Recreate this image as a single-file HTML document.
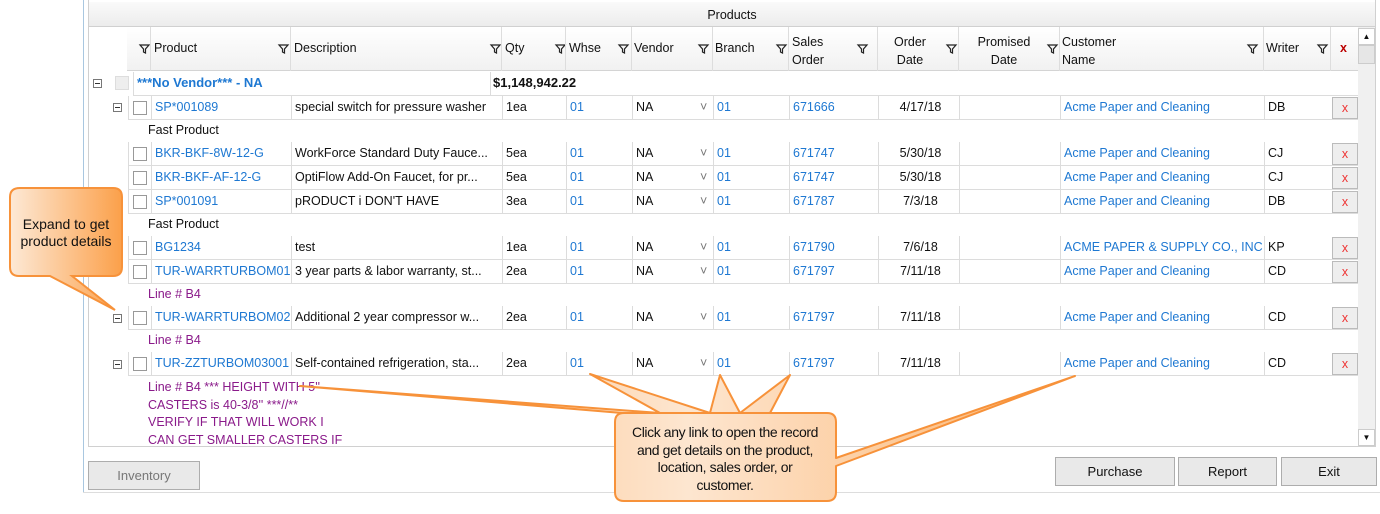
<!DOCTYPE html><html><head><style>
*{margin:0;padding:0;box-sizing:border-box}
body{width:1380px;height:514px;background:#fff;position:relative;overflow:hidden;font-family:"Liberation Sans",sans-serif;font-size:12.5px;color:#111}
.a{position:absolute}
.r{position:absolute;left:128px;width:1230px;height:24px;border-bottom:1px solid #dcdcdc;border-left:1px solid #dcdcdc}
.c{position:absolute;top:0;height:23px;line-height:23px;border-left:1px solid #dcdcdc;padding-left:3px;white-space:nowrap;overflow:hidden}
.l{color:#1e78d2}
.cb{position:absolute;left:4px;top:5px;width:14px;height:14px;border:1px solid #999;background:#fff}
.xb{position:absolute;left:1203px;top:1px;width:26px;height:22px;border:1px solid #bbb;background:#eee;color:#e33;text-align:center;line-height:20px}
.ex{position:absolute;width:9px;height:9px;border:1px solid #777;background:#fff}
.ex:after{content:"";position:absolute;left:1px;top:3px;width:5px;height:1px;background:#333}
.btn{position:absolute;border:1px solid #adadad;background:#e9e9e9;text-align:center;font-size:13px}
.n{position:absolute;color:#111;left:148px;font-size:12.5px}
.p{color:#8a1a8a}
.v{position:absolute;left:67px;color:#777}
</style></head><body>
<div class="a" style="left:83px;top:0;width:1px;height:493px;background:#a9c7e0"></div>
<div class="a" style="left:83px;top:492px;width:1297px;height:1px;background:#ddd"></div>
<div class="a" style="left:88px;top:0;width:1288px;height:447px;border:1px solid #d0d0d0;border-top:none"></div>
<div class="a" style="left:89px;top:2px;width:1286px;height:25px;background:linear-gradient(#fafafa,#ececec);border-bottom:1px solid #d0d0d0;text-align:center;line-height:26px;font-size:12.5px">Products</div>
<div class="a" style="left:89px;top:27px;width:1269px;height:44px;background:linear-gradient(#fff,#f1f1f1);border-bottom:1px solid #d4d4d4"></div>
<div class="a" style="left:89px;top:27px;width:38px;height:44px;background:#fff"></div>
<svg class="a" style="left:0;top:0" width="1380" height="80">
<g fill="none" stroke="#222" stroke-width="1.2">
<path id="fl" d="M140 45h9l-3.5 4v4l-2-1v-3z"/>
<use href="#fl" x="139"/><use href="#fl" x="351"/><use href="#fl" x="416"/><use href="#fl" x="479"/><use href="#fl" x="559"/><use href="#fl" x="637"/><use href="#fl" x="718"/><use href="#fl" x="807"/><use href="#fl" x="908"/><use href="#fl" x="1108"/><use href="#fl" x="1178"/>
</g>
<g stroke="#ddd"><path d="M150.5 27v44M290.5 27v44M501.5 27v44M565.5 27v44M631.5 27v44M712.5 27v44M788.5 27v44M877.5 27v44M958.5 27v44M1059.5 27v44M1263.5 27v44M1330.5 27v44"/></g>
</svg>
<div class="a" style="left:154px;top:41px">Product</div>
<div class="a" style="left:294px;top:41px">Description</div>
<div class="a" style="left:505px;top:41px">Qty</div>
<div class="a" style="left:569px;top:41px">Whse</div>
<div class="a" style="left:634px;top:41px">Vendor</div>
<div class="a" style="left:715px;top:41px">Branch</div>
<div class="a" style="left:792px;top:33px;line-height:18px">Sales<br>Order</div>
<div class="a" style="left:880px;top:33px;line-height:18px;width:60px;text-align:center">Order<br>Date</div>
<div class="a" style="left:962px;top:33px;line-height:18px;width:84px;text-align:center">Promised<br>Date</div>
<div class="a" style="left:1062px;top:33px;line-height:18px">Customer<br>Name</div>
<div class="a" style="left:1266px;top:41px">Writer</div>
<div class="a" style="left:1340px;top:41px;color:#b00;font-weight:bold">x</div>
<div class="a" style="left:1358px;top:27px;width:17px;height:419px;background:#f0f0f0"></div>
<div class="a" style="left:1358px;top:28px;width:17px;height:17px;border:1px solid #ccc;background:#fff;font-size:8px;text-align:center;line-height:15px">▲</div>
<div class="a" style="left:1358px;top:45px;width:17px;height:19px;border:1px solid #ccc;background:#e6e6e6"></div>
<div class="a" style="left:1358px;top:429px;width:17px;height:17px;border:1px solid #ccc;background:#fff;font-size:8px;text-align:center;line-height:15px">▼</div>
<div class="ex" style="left:93px;top:79px"></div>
<div class="a" style="left:115px;top:76px;width:14px;height:14px;background:#eee;border:1px solid #ddd"></div>
<div class="a" style="left:133px;top:72px;width:1225px;height:24px;border-left:1px solid #dcdcdc;border-bottom:1px solid #dcdcdc"></div>
<div class="a" style="left:137px;top:75px;font-weight:bold;color:#1e78d2;font-size:13px">***No Vendor*** - NA</div>
<div class="a" style="left:490px;top:72px;height:24px;border-left:1px solid #dcdcdc"></div>
<div class="a" style="left:493px;top:75px;font-weight:bold;font-size:13px">$1,148,942.22</div>

<div class="ex" style="left:113px;top:103px"></div>
<div class="r" style="top:96px"><div class="cb"></div><div class="c l" style="left:22px;width:140px">SP*001089</div><div class="c" style="left:162px;width:211px">special switch for pressure washer</div><div class="c" style="left:373px;width:64px">1ea</div><div class="c l" style="left:437px;width:66px">01</div><div class="c" style="left:503px;width:81px">NA<span class="v">˅</span></div><div class="c l" style="left:584px;width:76px">01</div><div class="c l" style="left:660px;width:89px">671666</div><div class="c" style="left:749px;width:81px;text-align:center">4/17/18</div><div class="c" style="left:830px;width:101px"></div><div class="c l" style="left:931px;width:204px">Acme Paper and Cleaning</div><div class="c" style="left:1135px;width:67px">DB</div><div class="xb">x</div></div>
<div class="n" style="top:123px">Fast Product</div>
<div class="r" style="top:142px"><div class="cb"></div><div class="c l" style="left:22px;width:140px">BKR-BKF-8W-12-G</div><div class="c" style="left:162px;width:211px">WorkForce Standard Duty Fauce...</div><div class="c" style="left:373px;width:64px">5ea</div><div class="c l" style="left:437px;width:66px">01</div><div class="c" style="left:503px;width:81px">NA<span class="v">˅</span></div><div class="c l" style="left:584px;width:76px">01</div><div class="c l" style="left:660px;width:89px">671747</div><div class="c" style="left:749px;width:81px;text-align:center">5/30/18</div><div class="c" style="left:830px;width:101px"></div><div class="c l" style="left:931px;width:204px">Acme Paper and Cleaning</div><div class="c" style="left:1135px;width:67px">CJ</div><div class="xb">x</div></div>
<div class="r" style="top:166px"><div class="cb"></div><div class="c l" style="left:22px;width:140px">BKR-BKF-AF-12-G</div><div class="c" style="left:162px;width:211px">OptiFlow Add-On Faucet, for pr...</div><div class="c" style="left:373px;width:64px">5ea</div><div class="c l" style="left:437px;width:66px">01</div><div class="c" style="left:503px;width:81px">NA<span class="v">˅</span></div><div class="c l" style="left:584px;width:76px">01</div><div class="c l" style="left:660px;width:89px">671747</div><div class="c" style="left:749px;width:81px;text-align:center">5/30/18</div><div class="c" style="left:830px;width:101px"></div><div class="c l" style="left:931px;width:204px">Acme Paper and Cleaning</div><div class="c" style="left:1135px;width:67px">CJ</div><div class="xb">x</div></div>
<div class="r" style="top:190px"><div class="cb"></div><div class="c l" style="left:22px;width:140px">SP*001091</div><div class="c" style="left:162px;width:211px">pRODUCT i DON'T HAVE</div><div class="c" style="left:373px;width:64px">3ea</div><div class="c l" style="left:437px;width:66px">01</div><div class="c" style="left:503px;width:81px">NA<span class="v">˅</span></div><div class="c l" style="left:584px;width:76px">01</div><div class="c l" style="left:660px;width:89px">671787</div><div class="c" style="left:749px;width:81px;text-align:center">7/3/18</div><div class="c" style="left:830px;width:101px"></div><div class="c l" style="left:931px;width:204px">Acme Paper and Cleaning</div><div class="c" style="left:1135px;width:67px">DB</div><div class="xb">x</div></div>
<div class="n" style="top:217px">Fast Product</div>
<div class="r" style="top:236px"><div class="cb"></div><div class="c l" style="left:22px;width:140px">BG1234</div><div class="c" style="left:162px;width:211px">test</div><div class="c" style="left:373px;width:64px">1ea</div><div class="c l" style="left:437px;width:66px">01</div><div class="c" style="left:503px;width:81px">NA<span class="v">˅</span></div><div class="c l" style="left:584px;width:76px">01</div><div class="c l" style="left:660px;width:89px">671790</div><div class="c" style="left:749px;width:81px;text-align:center">7/6/18</div><div class="c" style="left:830px;width:101px"></div><div class="c l" style="left:931px;width:204px">ACME PAPER &amp; SUPPLY CO., INC</div><div class="c" style="left:1135px;width:67px">KP</div><div class="xb">x</div></div>
<div class="r" style="top:260px"><div class="cb"></div><div class="c l" style="left:22px;width:140px">TUR-WARRTURBOM01</div><div class="c" style="left:162px;width:211px">3 year parts &amp; labor warranty, st...</div><div class="c" style="left:373px;width:64px">2ea</div><div class="c l" style="left:437px;width:66px">01</div><div class="c" style="left:503px;width:81px">NA<span class="v">˅</span></div><div class="c l" style="left:584px;width:76px">01</div><div class="c l" style="left:660px;width:89px">671797</div><div class="c" style="left:749px;width:81px;text-align:center">7/11/18</div><div class="c" style="left:830px;width:101px"></div><div class="c l" style="left:931px;width:204px">Acme Paper and Cleaning</div><div class="c" style="left:1135px;width:67px">CD</div><div class="xb">x</div></div>
<div class="n p" style="top:287px">Line # B4</div>
<div class="ex" style="left:113px;top:314px"></div>
<div class="r" style="top:306px"><div class="cb"></div><div class="c l" style="left:22px;width:140px">TUR-WARRTURBOM02</div><div class="c" style="left:162px;width:211px">Additional 2 year compressor w...</div><div class="c" style="left:373px;width:64px">2ea</div><div class="c l" style="left:437px;width:66px">01</div><div class="c" style="left:503px;width:81px">NA<span class="v">˅</span></div><div class="c l" style="left:584px;width:76px">01</div><div class="c l" style="left:660px;width:89px">671797</div><div class="c" style="left:749px;width:81px;text-align:center">7/11/18</div><div class="c" style="left:830px;width:101px"></div><div class="c l" style="left:931px;width:204px">Acme Paper and Cleaning</div><div class="c" style="left:1135px;width:67px">CD</div><div class="xb">x</div></div>
<div class="n p" style="top:333px">Line # B4</div>
<div class="ex" style="left:113px;top:360px"></div>
<div class="r" style="top:352px"><div class="cb"></div><div class="c l" style="left:22px;width:140px">TUR-ZZTURBOM03001</div><div class="c" style="left:162px;width:211px">Self-contained refrigeration, sta...</div><div class="c" style="left:373px;width:64px">2ea</div><div class="c l" style="left:437px;width:66px">01</div><div class="c" style="left:503px;width:81px">NA<span class="v">˅</span></div><div class="c l" style="left:584px;width:76px">01</div><div class="c l" style="left:660px;width:89px">671797</div><div class="c" style="left:749px;width:81px;text-align:center">7/11/18</div><div class="c" style="left:830px;width:101px"></div><div class="c l" style="left:931px;width:204px">Acme Paper and Cleaning</div><div class="c" style="left:1135px;width:67px">CD</div><div class="xb">x</div></div>
<div class="n p" style="top:379px;line-height:17.6px">Line # B4 *** HEIGHT WITH 5''<br>CASTERS is 40-3/8'' ***//**<br>VERIFY IF THAT WILL WORK I<br>CAN GET SMALLER CASTERS IF</div>

<div class="btn" style="left:88px;top:461px;width:112px;height:29px;line-height:27px;color:#777">Inventory</div>
<div class="btn" style="left:1055px;top:457px;width:120px;height:29px;line-height:27px">Purchase</div>
<div class="btn" style="left:1178px;top:457px;width:99px;height:29px;line-height:27px">Report</div>
<div class="btn" style="left:1281px;top:457px;width:96px;height:29px;line-height:27px">Exit</div>

<svg class="a" style="left:0;top:0" width="1380" height="514">
<defs>
<linearGradient id="g" x1="0" y1="0" x2="1" y2="0"><stop offset="0" stop-color="#fde9d6"/><stop offset="1" stop-color="#fba04a"/></linearGradient>
<linearGradient id="g2" x1="0" y1="0" x2="1" y2="0"><stop offset="0" stop-color="#fcb36e"/><stop offset=".5" stop-color="#fde6d0"/><stop offset="1" stop-color="#fcb36e"/></linearGradient>
</defs>
<path d="M20 188h93q9 0 9 9v70q0 9-9 9H72l43 34-65-34H19q-9 0-9-9v-70q0-9 10-9z" fill="url(#g)" stroke="#f7923a" stroke-width="2"/>
<path d="M622 413L300 386 660 413 590 374 710 413 720 375 740 413 790 375 770 413H624q-9 0-9 9v70q0 9 9 9h203q9 0 9-9v-26L1075 376 836 458V422q0-9-9-9z" fill="url(#g2)" stroke="#f7923a" stroke-width="2" stroke-linejoin="round"/>
</svg>
<div class="a" style="left:14px;top:216px;width:104px;text-align:center;font-size:14px;line-height:17px;color:#111">Expand to get product details</div>
<div class="a" style="left:615px;top:424px;width:220px;text-align:center;font-size:14px;line-height:17.5px;color:#111;letter-spacing:-0.4px;white-space:nowrap">Click any link to open the record<br>and get details on the product,<br>location, sales order, or<br>customer.</div>
</body></html>
